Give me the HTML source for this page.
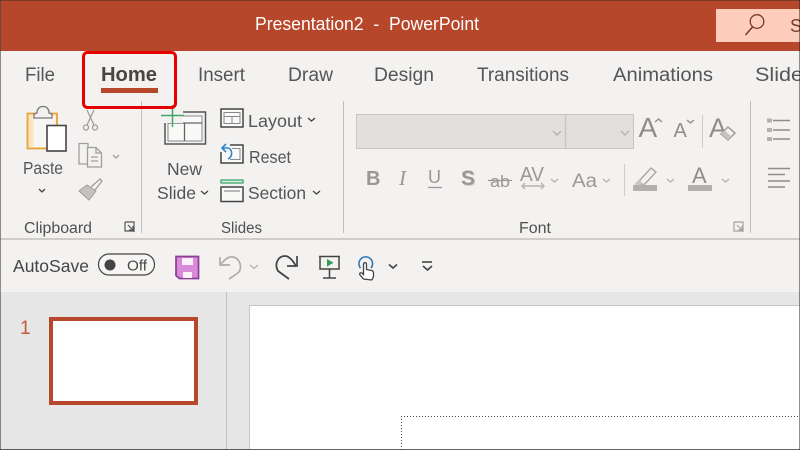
<!DOCTYPE html>
<html><head><meta charset="utf-8"><style>
html,body{margin:0;padding:0;width:800px;height:450px;overflow:hidden;background:#e6e6e6}
svg{display:block}
text{font-family:"Liberation Sans",sans-serif;fill:#444;font-size:17px}
.g{stroke:#8f8d8b;stroke-width:1.4;fill:none}
.l{stroke:#b5b3b1;stroke-width:1.4;fill:none}
.d{stroke:#444;stroke-width:1.6;fill:none}
.c{stroke:#a09e9c;stroke-width:1.3;fill:none}
.k{stroke:#444;stroke-width:1.3;fill:none}
.t{fill:#555;font-size:19px}
.s{fill:#505050;font-size:15.5px}
.m{fill:#555;font-size:17.500px}
</style></head><body>
<svg width="800" height="450" viewBox="0 0 800 450" xmlns="http://www.w3.org/2000/svg">
<rect width="800" height="450" fill="#e6e6e6"/>
<rect width="800" height="51" fill="#b7472a"/>
<rect width="800" height="1" fill="#7a3a28"/>
<text x="255" y="30" textLength="224" lengthAdjust="spacingAndGlyphs" style="fill:#fff;font-size:18px">Presentation2&#160;&#160;-&#160;&#160;PowerPoint</text>
<rect x="716" y="9" width="84" height="33" fill="#ffcdbb"/>
<circle cx="757" cy="21.5" r="6.800" fill="none" stroke="#7c3a28" stroke-width="1.300"/>
<path d="M752.500 27L745.500 35" stroke="#7c3a28" stroke-width="1.600" fill="none"/>
<text x="790" y="32" style="fill:#7c3a28;font-size:18px">S</text>

<rect y="51" width="800" height="187" fill="#f3f2f1"/>
<rect y="238" width="800" height="2" fill="#cfcdcb"/>
<rect y="240" width="800" height="52" fill="#f3f2f1"/>

<text class="t" x="25" y="81" textLength="30" lengthAdjust="spacingAndGlyphs">File</text>
<text class="t" x="101" y="81" textLength="56" lengthAdjust="spacingAndGlyphs" style="font-weight:bold;fill:#484644;font-size:20px">Home</text>
<text class="t" x="198" y="81" textLength="47" lengthAdjust="spacingAndGlyphs">Insert</text>
<text class="t" x="288" y="81" textLength="45" lengthAdjust="spacingAndGlyphs">Draw</text>
<text class="t" x="374" y="81" textLength="60" lengthAdjust="spacingAndGlyphs">Design</text>
<text class="t" x="477" y="81" textLength="92" lengthAdjust="spacingAndGlyphs">Transitions</text>
<text class="t" x="613" y="81" textLength="100" lengthAdjust="spacingAndGlyphs">Animations</text>
<text class="t" x="755" y="81" textLength="48" lengthAdjust="spacingAndGlyphs">Slide</text>
<rect x="101" y="88" width="57" height="5" fill="#b7472a"/>

<!-- separators -->
<path d="M141.500 101V233M343.500 101V233M750.500 101V233" stroke="#c1bfbd" stroke-width="1"/>
<path d="M702.500 115V148M624.500 164V196" stroke="#d0cecc" stroke-width="1"/>

<!-- Paste -->
<path d="M27.500 113.500H57V126H47V148.500H27.500z" fill="#fce4bd" stroke="#e8a33d" stroke-width="1.800"/>
<rect x="33.500" y="116" width="22" height="9" fill="#f7f6f4"/>
<rect x="33.500" y="116" width="13" height="31" fill="#f7f6f4"/>
<path d="M34 118v-4l3-1v-1.500c1-3 2-5 6-5s5 2 6 5V113l3 1v4z" fill="#f3f2f1" stroke="#777" stroke-width="1.300"/>
<rect x="47" y="125.500" width="19" height="25.500" fill="#fff" stroke="#444" stroke-width="1.600"/>
<text class="m" x="23" y="174" textLength="40" lengthAdjust="spacingAndGlyphs">Paste</text>
<path d="M39 189l3 3 3-3" class="k"/>
<!-- scissors, copy, brush -->
<circle cx="86" cy="127.500" r="2.500" class="c"/><circle cx="95" cy="127.500" r="2.500" class="c"/>
<path d="M87 125L94 110M94 125L87 110" class="c"/>
<path d="M87 164H79V143.500H88V147" class="c"/>
<path d="M87.500 147.500H96l5.500 5.500V167H87.500zM96 147.500V153H101.500" class="c"/>
<path d="M91 157h7M91 161h7" class="c"/>
<path d="M113 155l3 3 3-3" class="c"/>
<path d="M79 191l8-6 9 6-7 9z" fill="#c5c3c1" stroke="#a09e9c"/>
<path d="M91 187l9-8 2 2-7 9" class="c"/>
<text class="s" x="24" y="233" textLength="68" lengthAdjust="spacingAndGlyphs">Clipboard</text>
<path d="M125 222h9v10M125 222v9h9M128 225l5 5M133 226v4h-4" fill="none" stroke="#555" stroke-width="1.200"/>

<!-- New Slide -->
<rect x="165" y="112" width="40.500" height="32" fill="none" stroke="#555" stroke-width="1.500"/>
<rect x="168" y="116" width="34" height="25" fill="#f9f9f8" stroke="#888" stroke-width="1"/>
<path d="M168 123H202M184.500 123V141" stroke="#666" stroke-width="1.300" fill="none"/>
<rect x="161" y="107" width="22" height="16" fill="#f3f2f1"/>
<path d="M161 115.500H184M172.500 105V127" stroke="#3fa66a" stroke-width="1.500" fill="none"/>
<text class="m" x="167" y="175" textLength="35" lengthAdjust="spacingAndGlyphs">New</text>
<text class="m" x="157" y="199" textLength="39" lengthAdjust="spacingAndGlyphs">Slide</text>
<path d="M201 191l3.500 3 3.500-3" class="k"/>

<!-- Layout/Reset/Section -->
<rect x="221" y="109" width="22" height="18" fill="#f9f9f8" stroke="#444" stroke-width="1.500"/>
<path d="M224 112.500h16v11h-16zM224 116.500h16M232 116.500v7" fill="none" stroke="#888"/>
<text class="m" x="248" y="127" textLength="54" lengthAdjust="spacingAndGlyphs">Layout</text>
<path d="M308 118l3.500 3 3.500-3" class="k"/>
<rect x="221" y="145" width="22" height="18" fill="#f9f9f8" stroke="#444" stroke-width="1.500"/>
<path d="M232 148.500h8v11h-10" fill="none" stroke="#888"/>
<rect x="219" y="143" width="11" height="9" fill="#f3f2f1"/>
<path d="M228 159c5-2 5-11-1-11h-4M226 144l-4 4 4 4" fill="none" stroke="#2f86c9" stroke-width="1.600"/>
<text class="m" x="249" y="163" textLength="42" lengthAdjust="spacingAndGlyphs">Reset</text>
<rect x="221" y="180" width="22" height="3" fill="#d6ecdf" stroke="#3fa66a" stroke-width="1.300"/>
<rect x="221" y="187" width="22" height="14.500" fill="#f9f9f8" stroke="#444" stroke-width="1.500"/>
<path d="M224 191h16" stroke="#777"/>
<text class="m" x="248" y="199" textLength="58" lengthAdjust="spacingAndGlyphs">Section</text>
<path d="M313 191l3.500 3 3.500-3" class="k"/>
<text class="s" x="221" y="233" textLength="41" lengthAdjust="spacingAndGlyphs">Slides</text>

<!-- Font -->
<rect x="356.500" y="114.500" width="277" height="34" fill="#e1e0df" stroke="#c8c6c4"/>
<path d="M565.500 114.500V148.500" stroke="#c8c6c4" stroke-width="1.500"/>
<path d="M553 131l4 4 4-4M621 131l4 4 4-4" class="l"/>
<text x="638.500" y="137" style="fill:#8f8d8b;font-size:28px">A</text>
<path d="M655 122l3.500-3 3.500 3" class="g"/>
<text x="673.500" y="137" style="fill:#8f8d8b;font-size:20px">A</text>
<path d="M687 120l3.500 3 3.500-3" class="g"/>
<text x="709" y="137" style="fill:#8f8d8b;font-size:27px">A</text>
<path d="M721 134l7-7 7 6-7 7z" fill="#f3f2f1" stroke="#a09e9c" stroke-width="1.500"/>
<path d="M721 134l3.500-3.500 7 6-3.500 3.500z" fill="#c5c3c1"/>

<text x="366" y="185" style="fill:#9a9896;font-size:20px;font-weight:bold">B</text>
<text x="399" y="185" style="fill:#9a9896;font-size:21px;font-style:italic;font-family:'Liberation Serif',serif">I</text>
<text x="428" y="183" style="fill:#9a9896;font-size:18px">U</text>
<path d="M428 187.500H442" stroke="#9a9896" stroke-width="1.300"/>
<text x="462" y="186" style="fill:#d0cecc;font-size:21px;font-weight:bold">S</text>
<text x="461" y="185" style="fill:#9a9896;font-size:21px;font-weight:bold">S</text>
<text x="490" y="187" textLength="20" lengthAdjust="spacingAndGlyphs" style="fill:#9a9896;font-size:17px">ab</text>
<path d="M488 180.500H512" stroke="#9a9896" stroke-width="1.200"/>
<text x="520" y="181" textLength="24" lengthAdjust="spacingAndGlyphs" style="fill:#9a9896;font-size:20px">AV</text>
<path d="M522 186H544M525 183l-3 3 3 3M541 183l3 3-3 3" class="l"/>
<path d="M551 179l3.500 3 3.500-3" class="l"/>
<text x="572" y="187" textLength="25" lengthAdjust="spacingAndGlyphs" style="fill:#9a9896;font-size:19px">Aa</text>
<path d="M603 179l3.500 3 3.500-3" class="l"/>
<path d="M640 180l11-12 5 4-11 12-5 1z" fill="none" stroke="#a5a3a1" stroke-width="1.300"/>
<path d="M635 183.500l4-4 5 5-9 .5z" fill="#c8c6c4"/>
<rect x="633" y="185" width="24" height="6" fill="#b3afac"/>
<path d="M667 179l3.500 3 3.500-3" class="l"/>
<text x="692" y="183" style="fill:#8f8d8b;font-size:22px">A</text>
<rect x="688" y="185" width="24" height="6" fill="#b3afac"/>
<path d="M722 179l3.500 3 3.500-3" class="l"/>
<text class="s" x="519" y="233" textLength="32" lengthAdjust="spacingAndGlyphs">Font</text>
<path d="M734 222h9v10M734 222v9h9M737 225l5 5M742 226v4h-4" fill="none" stroke="#a5a3a1" stroke-width="1.200"/>

<!-- right paragraph -->
<path d="M767 120.500h5M767 130h5M767 139h5" stroke="#b3b1af" stroke-width="4"/>
<path d="M773 120.500H790M773 130H790M773 139H790" class="g"/>
<path d="M768 168.500H790M768 174.500H785M768 181H790M768 187H785" class="g"/>

<!-- Red highlight -->
<rect x="83.500" y="52.500" width="92" height="55" rx="4" fill="none" stroke="#e60000" stroke-width="3"/>

<!-- QAT -->
<text x="13" y="272" textLength="76" lengthAdjust="spacingAndGlyphs" style="font-size:17.500px;fill:#444">AutoSave</text>
<rect x="98.500" y="254" width="56" height="21" rx="10.500" fill="#f6f5f4" stroke="#444" stroke-width="1.200"/>
<circle cx="110" cy="265" r="5.500" fill="#444"/>
<text x="127" y="270.500" textLength="20" lengthAdjust="spacingAndGlyphs" style="font-size:15px;fill:#444">Off</text>
<path d="M176 256.500h22.500v22h-19l-3.500-3z" fill="#d88cd8" stroke="#8c3d96" stroke-width="1.700"/>
<rect x="182" y="258" width="11" height="7" fill="#fbeffb"/>
<rect x="183" y="272" width="9" height="6" fill="#fbeffb"/>
<path d="M221 264C226 258 230 256 233 257C240 258 243 268 238 273L229 279" fill="none" stroke="#b0aeac" stroke-width="1.700"/>
<path d="M220 257V265H230" fill="none" stroke="#b0aeac" stroke-width="1.700"/>
<path d="M250 265l4 3.500 4-3.500" class="l"/>
<path d="M296 266C292 259 288 256 285 256C278 256 274 264 278 271L289 279" fill="none" stroke="#444" stroke-width="1.800"/>
<path d="M297 256V266H287" fill="none" stroke="#444" stroke-width="1.700"/>
<path d="M319 256.500h21M320 256.500v12.500h19v-12.500" fill="none" stroke="#444" stroke-width="1.500"/>
<path d="M327 259l6.500 3.800-6.500 3.800z" fill="#2f9e5c"/>
<path d="M329.500 269v9M323 278H336" stroke="#444" stroke-width="1.500"/>
<path d="M360.500 268a6.800 6.800 0 1 1 10.500 0" fill="none" stroke="#2f78b7" stroke-width="1.600"/>
<path d="M363.500 279l-3.500-4c-1-2 1-3 2.500-1.500l1 1v-10c0-2.500 3-2.500 3 0v5l5 1c1.500.3 2 1 2 2.500v3c0 2-1 3-2 4z" fill="#fff" stroke="#444" stroke-width="1.300"/>
<path d="M389 264.500l4 3.500 4-3.500" class="d"/>
<path d="M422 262H432" stroke="#444" stroke-width="1.600"/>
<path d="M423 266l4.500 4 4.500-4" class="d"/>

<!-- Lower -->
<rect x="226" y="292" width="1" height="158" fill="#c1bfbd"/>
<text x="20" y="334" style="fill:#c55a3a;font-size:19px">1</text>
<rect x="51" y="319" width="145" height="84" fill="#fff" stroke="#b7472a" stroke-width="4"/>
<rect x="249.500" y="305.500" width="560" height="160" fill="#fff" stroke="#c8c6c4"/>
<path d="M401.500 450V416.500H800" fill="none" stroke="#444" stroke-width="1" stroke-dasharray="1 2"/>
<rect x="0" y="0" width="1" height="450" fill="#444" opacity=".6"/>
<rect x="0" y="449" width="800" height="1" fill="#222" opacity=".7"/>
<rect x="799" y="0" width="1" height="450" fill="#222" opacity=".5"/>
</svg>
</body></html>
